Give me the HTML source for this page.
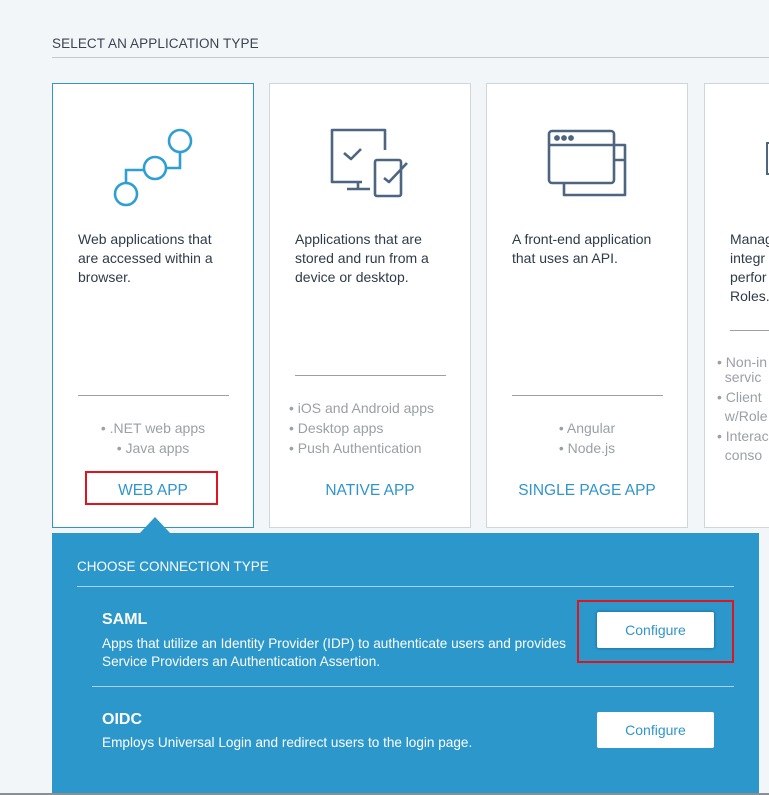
<!DOCTYPE html>
<html><head><style>
*{box-sizing:border-box;margin:0;padding:0}
body{width:769px;height:795px;background:#f3f6f9;font-family:"Liberation Sans",sans-serif;position:relative;overflow:hidden;color:#2f3b48}
.h{position:absolute;left:52px;top:36px;font-size:13.5px;color:#3b4450;letter-spacing:0.1px}
.hl{position:absolute;left:52px;top:57px;width:717px;height:1px;background:#c4c8cc}
.card{position:absolute;top:83px;width:202px;height:445px;background:#fff;border:1px solid #cfd6dc}
.card.sel{border-color:#2f95cc}
.desc{position:absolute;left:25px;top:146px;width:150px;font-size:14px;line-height:19px;color:#2f3b48}
.sep{position:absolute;left:25px;width:151px;height:1px;background:#9aa0a6}
.list{position:absolute;left:0;width:100%;text-align:center;font-size:14px;line-height:20px;color:#9aa0a6}
.title{position:absolute;left:0;width:100%;top:398px;text-align:center;font-size:15.5px;color:#2f95cc}
.panel{position:absolute;left:52px;top:533px;width:707px;height:262px;background:#2b97cb;color:#fff}
.btn{position:absolute;left:545px;width:117px;height:36px;background:#fff;border-radius:2px;color:#2f95cc;font-size:14px;text-align:center;line-height:36px}
</style></head><body>
<div class="h">SELECT AN APPLICATION TYPE</div>
<div class="hl"></div>

<div class="card sel" style="left:52px">
<svg style="position:absolute;left:55px;top:40px" width="90" height="90" viewBox="0 0 90 90" fill="none" stroke="#2f9fd3" stroke-width="2.6">
<circle cx="18" cy="70" r="11"/><circle cx="47" cy="44" r="11"/><circle cx="72" cy="17" r="11"/>
<path d="M18 59V46H36M58 44H72V28"/></svg>
<div class="desc">Web applications that are accessed within a browser.</div>
<div class="sep" style="top:311px"></div>
<div class="list" style="top:334px">• .NET web apps<br>• Java apps</div>
<div class="title">WEB APP</div>
<div style="position:absolute;left:32px;top:387px;width:133px;height:34px;border:2px solid #e0141e"></div>
</div>
<div style="position:absolute;left:139px;top:517px;width:0;height:0;border-left:16px solid transparent;border-right:16px solid transparent;border-bottom:17px solid #2b97cb"></div>

<div class="card" style="left:269px">
<svg style="position:absolute;left:58px;top:44px" width="86" height="72" viewBox="0 0 86 72" fill="none" stroke="#4d6580" stroke-width="2.6" stroke-linejoin="round">
<path d="M34 54H4V2H57V22"/><path d="M30 54V61M19 61H42"/><path d="M16 25L23 31L33 21"/>
<rect x="47" y="32" width="26" height="36" rx="2"/><path d="M56 50L61 54L79 35"/></svg>
<div class="desc">Applications that are stored and run from a device or desktop.</div>
<div class="sep" style="top:291px"></div>
<div class="list" style="top:314px;text-align:left;left:19px">• iOS and Android apps<br>• Desktop apps<br>• Push Authentication</div>
<div class="title">NATIVE APP</div>
</div>

<div class="card" style="left:486px">
<svg style="position:absolute;left:60px;top:45px" width="84" height="72" viewBox="0 0 84 72" fill="none" stroke="#4d6580" stroke-width="2.6" stroke-linejoin="round">
<rect x="2" y="2" width="65" height="52" rx="3"/><path d="M2 16H67"/>
<circle cx="10" cy="9" r="1.6" fill="#4d6580"/><circle cx="17" cy="9" r="1.6" fill="#4d6580"/><circle cx="24" cy="9" r="1.6" fill="#4d6580"/>
<path d="M67 16H78V66H17V54M67 31H78"/></svg>
<div class="desc" style="width:165px">A front-end application that uses an API.</div>
<div class="sep" style="top:311px"></div>
<div class="list" style="top:334px">• Angular<br>• Node.js</div>
<div class="title">SINGLE PAGE APP</div>
</div>

<div class="card" style="left:704px;width:80px">
<svg style="position:absolute;left:60px;top:57px" width="20" height="40" viewBox="0 0 20 40" fill="none" stroke="#4d6580" stroke-width="2"><path d="M5 2H2V33H5"/></svg>
<div class="desc" style="width:60px;white-space:nowrap">Manag<br>integr<br>perfor<br>Roles.</div>
<div class="sep" style="top:246px"></div>
<div class="list" style="top:271px;text-align:left;left:12px;line-height:15px;white-space:nowrap">• Non-in<br>&nbsp; servic<br><span style="line-height:24px">• Client</span><br>&nbsp; w/Role<br><span style="line-height:24px">• Interac</span><br>&nbsp; conso</div>
</div>

<div class="panel">
<div style="position:absolute;left:25px;top:26px;font-size:13.5px">CHOOSE CONNECTION TYPE</div>
<div style="position:absolute;left:25px;top:53px;width:657px;height:1px;background:#a9d3ea"></div>
<div style="position:absolute;left:50px;top:78px;font-size:16px;font-weight:bold">SAML</div>
<div style="position:absolute;left:50px;top:102px;font-size:13.6px;line-height:18px;white-space:nowrap">Apps that utilize an Identity Provider (IDP) to authenticate users and provides<br>Service Providers an Authentication Assertion.</div>
<div class="btn" style="top:79px;box-shadow:0 0 3px #1a5f85">Configure</div>
<div style="position:absolute;left:525px;top:67px;width:157px;height:63px;border:2px solid #e0141e"></div>
<div style="position:absolute;left:40px;top:153px;width:642px;height:1px;background:#a9d3ea"></div>
<div style="position:absolute;left:50px;top:178px;font-size:16px;font-weight:bold">OIDC</div>
<div style="position:absolute;left:50px;top:202px;font-size:13.6px">Employs Universal Login and redirect users to the login page.</div>
<div class="btn" style="top:179px">Configure</div>
</div>
<div style="position:absolute;left:0;top:793px;width:769px;height:2px;background:#8a8f94"></div>
</body></html>
